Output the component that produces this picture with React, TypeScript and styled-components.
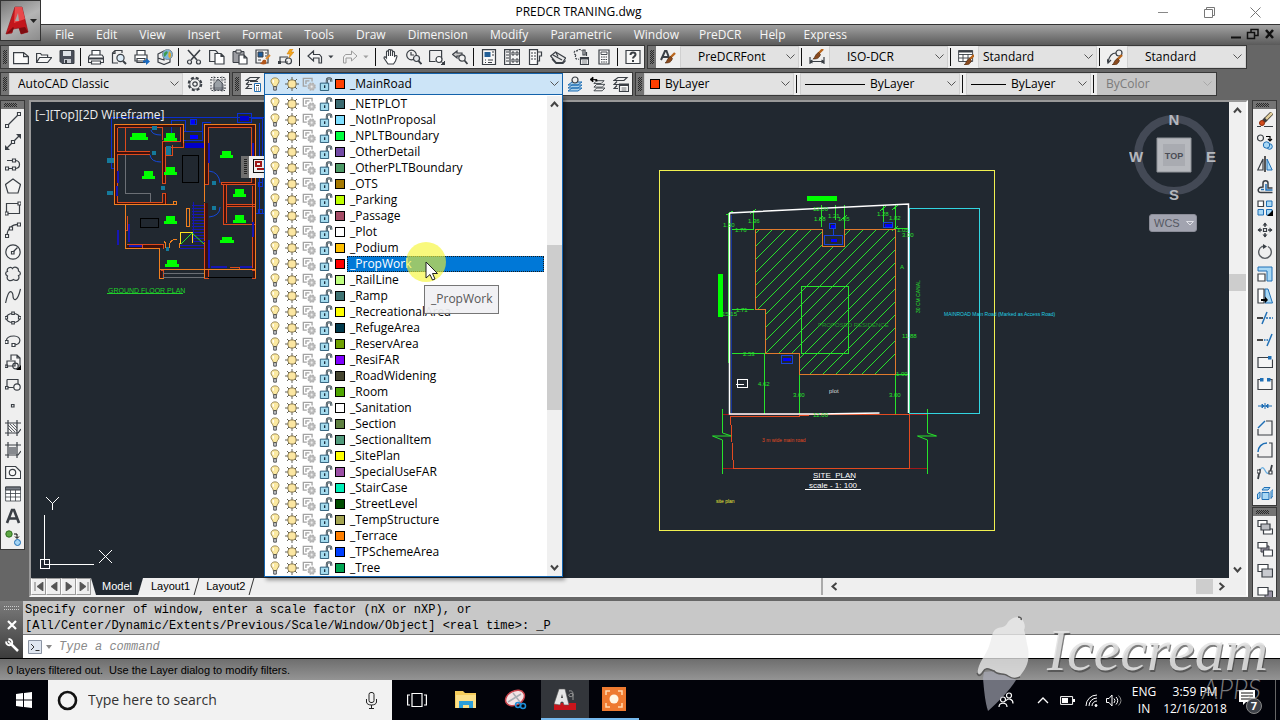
import React from 'react';
import styled, { createGlobalStyle, css } from 'styled-components';

const ui = '"Open Sans", "Noto Sans", sans-serif';
const arial = '"Liberation Sans", Arial, sans-serif';

const GlobalStyle = createGlobalStyle`
  * { box-sizing: border-box; }
  body { margin: 0; background: #666; font: 12px/16px ${ui}; color: #000; overflow: hidden; }
  button, select, input { font: inherit; color: inherit; border: 0; margin: 0; padding: 0; background: none; }
  ul { margin: 0; padding: 0; list-style: none; }
`;

/* ---------- icons ---------- */

const K = '#3a3f45';
const B = '#1f6fb5';
const L = '#a9d8f5';
const S = { fill: 'none', stroke: K, strokeWidth: 1.2 } as const;
const brush = <><path d="M15 4 10 9" stroke="#b9651c" strokeWidth="2.4" /><path d="M10.500 7.500 12.500 9.500C11 14 8 14 5 14c2-1 2-5 5.500-6.500z" fill="#8a4a1e" stroke="#4a2a12" strokeWidth=".6" /></>;
const sheets = <path d="M4 4h8l-3 3H1zM4 8h9l-3 3H1zM4 12h9l-3 3H1z" />;

const icons: Record<string, React.ReactNode> = {
  new: <path d="M.600 3.600h10l4.800 4v7H.600zM10.600 3.600v4h4.800" {...S} fill="#fafafa" />,
  open: <path d="M.600 13.500v-9h4l1 1.500h6v3M.600 13.500l3-5h12l-4 5z" {...S} fill="#f6f6f6" />,
  save: <><path d="M1 1.500h14v13H3l-2-2z" fill="#4a4f5a" stroke={K} /><path d="M4 2h8v5H4z" fill="#dfe3e8" /><path d="M5 10h7v4H5z" fill="#c9ccd2" /><path d="M6 11h2v3H6z" fill={K} /></>,
  print: <><path d="M4 6V1.500h8V6M2 6h12l1.500 2v5.500h-15V8z" {...S} fill="#fff" /><path d="M1 9.500h14" stroke={K} strokeWidth="2" /><path d="M3.500 12h9v3h-9z" {...S} fill="#fff" /></>,
  preview: <><path d="M11 4V1.500H4L1.500 4v10H7M1.500 4.500H4v-3" {...S} /><circle cx="9.500" cy="9" r="3.600" {...S} fill="#dcebf7" /><path d="m12 12 3 3" stroke={K} strokeWidth="2" /></>,
  publish: <><path d="M3 6V1.500h8V6M1 6h12v6H1zM3 9.500h8v4H3z" {...S} fill="#fff" /><path d="M9 11.500h3V9l4 3.500-4 3.500v-2.500H9z" fill="#1668c0" /></>,
  globe: <><path d="m1 5 6-3v9l-6-2zM1 9v4l6 2.500 6-2.500V9" {...S} fill="#eee" /><circle cx="10.500" cy="5.500" r="5" fill="#7ab8e0" stroke="#7d8790" /><path d="M8 3c2-2 4 0 2 2s-2 4-3 2 0-3 1-4z" fill="#3e9b4f" /><path d="M12 2c2 2 3 4 1 7-2 0-2-3-1-7z" fill="#e0a92c" /></>,
  cut: <><path d="m2 1 9 10M14 1 5 11" {...S} strokeWidth="1.600" /><circle cx="3.500" cy="13" r="2" {...S} /><circle cx="12.500" cy="13" r="2" {...S} /></>,
  copy: <><path d="M.600 1.500h6l2 2v9h-8z" {...S} /><path d="M6 4.500h6l3 3v7.500H6zM12 4.500v3h3" {...S} fill="#fff" /></>,
  paste: <><path d="M1 2.500h11v11H1z" fill="#9b9ca1" stroke={K} /><path d="M4 1h5v3H4z" fill="#ddd" stroke={K} /><path d="M7 6h5l3 3v6H7zM12 6v3h3" {...S} fill="#fff" /></>,
  match: <><path d="M1 1h12v13H1z" {...S} fill="#f4f4f4" /><path d="M3 3h5v5H3z" fill="#1d5c9c" stroke={K} /><path d="M10 4h2M10 7h2M3 11h3" stroke={K} /><path d="m15 6-4 4" stroke="#e08a2c" strokeWidth="2" /><path d="M8 11c3-1 4 0 3 4-3 1-6 0-6-1 2 0 2-2 3-3z" fill="#b2561b" /></>,
  block: <><path d="M2 14V8h8M2 13h8" {...S} /><circle cx="10.500" cy="12" r="3" {...S} /><path d="M0 12h3v3H0z" fill={K} /><path d="m12 0-3 5h3l-1 4 5-6h-3l2-3z" fill="#f4a51c" stroke="#c97a0a" strokeWidth=".5" /></>,
  undo: <path d="M6.500 2 1 7l5.500 5V9H12v5h2.500V8l-2-2.500h-6z" {...S} fill="#f6f6f6" />,
  redo: <path d="M9.500 2 15 7l-5.500 5V9H4v5H1.500V8l2-2.500h6z" fill="#f2f2f2" stroke="#9b9b9b" />,
  caret: <path d="M3 6h7L6.500 9.500z" fill={K} />,
  caretOff: <path d="M3 6h7L6.500 9.500z" fill="#a0a0a0" />,
  pan: <path d="M5 15 1 9c0-1 1-2 2.500 0V3c0-1.500 2-1.500 2 0v4-5.500c0-1.500 2-1.500 2 0V7 2c0-1.500 2-1.500 2 0v5-3.500c0-1.500 2-1.500 2 0V8c.500-2 2.500-2 2.500-.500L12.500 12l-2 3z" {...S} strokeWidth="1.100" fill="#fff" />,
  zoom: <><circle cx="5.500" cy="6" r="4.800" {...S} /><path d="M5 3v3h3" {...S} /><circle cx="10.500" cy="9.500" r="3" {...S} fill="#e4e7ea" /><path d="m12.500 12 3 3" stroke={K} strokeWidth="1.800" /></>,
  zoomWin: <><path d="M.600 1.500h12v9M.600 1.500v11h6" {...S} /><circle cx="10" cy="10.500" r="3" {...S} fill="#fff" /><path d="m12 12 2.500 3M16 12v4h-4z" fill={K} stroke={K} /></>,
  zoomPrev: <><path d="M.500 5.500 5 2v2h5v3H5v2z" {...S} fill="#c9c9c9" /><circle cx="10" cy="9" r="3.200" {...S} fill="#f1f1f1" /><path d="m12.500 11.500 3 3.500" stroke={K} strokeWidth="1.800" /></>,
  props: <><path d="M1.500.600h13v15h-13z" {...S} fill="#f8f8f8" /><path d="M3.500 3h6v5h-6z" fill="#235f97" /><path d="M11 3h2M11 6h2M4 11h1M4 13.500h1M7 11h5M7 13.500h4" stroke={K} /></>,
  center: <><path d="M.600.600h15v15h-15zM6 1v15" {...S} fill="#f4f4f4" /><path d="M2 3h3M2 6h3M2 9h3M2 12h3" stroke={K} /><path d="M8 3h2v3H8zM12 3h2v3h-2zM8 10h2v3H8zM12 10h2v3h-2z" {...S} strokeWidth="1" /></>,
  palettes: <><path d="M2.500.600h8v15h-8z" {...S} fill="#fafafa" /><path d="M10.500 3h4v4h-2v5h-2M10.500 12v3" {...S} /><path d="M4 4h2M7 4h2M4 7h2M7 7h2M4 10h2M7 10h2" stroke={K} /></>,
  sheetset: <><path d="m.600 7 5-4 10 6-3 4.500H6z" {...S} fill="#e9e9e9" /><path d="m2 10 4 4.500h7l2.500-3M3 6l9 5M6 3.500l2 4" {...S} /></>,
  markup: <><path d="M3 6C0 5 1 1 4 2c1-2 4-2 5 0M3 6c-2 3 1 5 3 4" {...S} strokeDasharray="2 1" /><path d="M10 1h2v5h-2zM13.500 3v4M7.500 8.500h8v7h-8z" {...S} fill="#fff" /><path d="M7.500 9.500h8" stroke={K} strokeWidth="2" /><path d="M9 12h5M9 14h5" stroke={K} strokeWidth=".7" /></>,
  calc: <><path d="M3 1h10v14H3z" {...S} fill="#fafafa" /><path d="M5 3h6v2.500H5z" {...S} strokeWidth=".9" /><path d="M5 8h6M5 10.500h6M5 13h6" stroke={K} strokeDasharray="1.500 .800" /></>,
  help: <><path d="M1 1.500h14v13H1z" {...S} fill="#f8f8f8" /><path d="M5.500 6c0-3.500 5-3 5-.500 0 2-2.500 2-2.500 4M8 11v2" fill="none" stroke={K} strokeWidth="2" /></>,
  textStyle: <><path d="m1 11 4-9h1.500l3 8M2.500 8h6" fill="none" stroke={K} strokeWidth="2" />{brush}</>,
  dimStyle: <><path d="M1 8v7M15 8v7M1 12.500h14M3.500 11 1 12.500 3.500 14M12.500 11l2.500 1.500-2.500 1.500" {...S} /><g transform="translate(-1 -4)">{brush}</g></>,
  tableStyle: <><path d="M.600 1.500h14v11H.600zM.600 5.500h14M.600 9h14M5 5v7.500M10 5v7.500" {...S} strokeWidth=".9" fill="#fff" /><path d="M.600 1.500h14v2H.600z" fill={K} /><g transform="translate(1 2)">{brush}</g></>,
  leaderStyle: <><path d="M1 13C2 8 4 4 9 4M0 10l1 4 3-3" {...S} /><circle cx="12" cy="4" r="3" {...S} /><g transform="translate(0 2)">{brush}</g></>,
  gear: <><circle cx="8" cy="8" r="6.300" {...S} strokeDasharray="3 1.950" strokeWidth="2" /><circle cx="8" cy="8" r="5.200" {...S} fill="#f1f1f1" strokeWidth=".8" /><circle cx="8" cy="8" r="2.200" {...S} /></>,
  home: <><path d="M1 1.500h14v13H1z" fill="none" stroke={K} strokeDasharray="1.500 1.500" /><path d="m8 3 5 5v6H4V8z" fill="#9aa0a6" stroke="#5a5f66" /><path d="M0 4h16M0 12h16M4 0v16M12 0v16" stroke={K} strokeWidth=".5" /></>,
  layerProps: <><path d="M5 1.500h9l-3 3H1zM5 5.500h8M1 8.500h6M4 5.500l-3 3M4 9.500l-3 3h6" {...S} /><path d="M9.500 7.500h6v8h-6z" fill="#fff" stroke={B} /><path d="M11 9.500h3M11 12h1M13 12h1M11 14h1M13 14h1" stroke={K} /></>,
  layerMake: <><g fill="#a9cfe9" stroke={B} strokeWidth="1"><path d="M5 6h10l-4 3H1zM5 9h10l-4 3H1zM5 12h10l-4 3H1z" /></g><circle cx="8" cy="4" r="3" {...S} fill="#eee" /></>,
  layerPrev: <><g {...S} strokeWidth="1" transform="translate(3 1) scale(.92)">{sheets}</g><path d="M0 3.500 3 1v5zM3 3.500h4v2" fill="#000" stroke="#000" strokeWidth=".8" /></>,
  layerStates: <><path d="M5 1.500h9l-3 3H1zM4 5.500l-3 3h5M4 9.500l-3 3h4" {...S} /><path d="M6.500 8h9v7.500h-9z" {...S} fill="#fff" /><path d="M6.500 9h9" stroke={K} strokeWidth="2" /><path d="M8.500 12h5M8.500 14h5" stroke={K} strokeWidth=".8" /></>,
  line: <><path d="M2 14 14 2" {...S} /><path d="M.500 12.500h3v3h-3zM12.500.500h3v3h-3z" {...S} fill="#fff" /></>,
  xline: <><path d="M2 14 14 2" {...S} /><path d="M6.500 6.500h3v3h-3z" {...S} fill="#fff" /><path d="M0 16v-5l5 5zM16 0v5l-5-5z" fill={K} /></>,
  pline: <><path d="M2 4.500h8c6 0 6 8 0 8H2" {...S} /><path d="M.500 11h3v3h-3zM7.500 3h3v3h-3zM7.500 11h3v3h-3z" {...S} fill="#fff" /></>,
  polygon: <path d="M8 1 15.500 6.500 13 15H3L.500 6.500z" {...S} fill="#f2f2f2" />,
  rect: <><path d="M1.500 3.500h13v10h-13z" {...S} /><path d="M0 12h3v3H0zM13 2h3v3h-3z" {...S} fill="#fff" /></>,
  arc: <><path d="M2 14C2 7 7 2 14 2.500" {...S} /><path d="M.500 12.500h3v3h-3zM4.500 5h3v3h-3zM12.500 1h3v3h-3z" {...S} fill="#fff" /></>,
  circle: <><circle cx="8" cy="8" r="7.200" {...S} fill="#f5f5f5" /><path d="m8 8 4.500-4.500" {...S} /><path d="M6.500 7.500h2.500V10H6.500z" {...S} fill="#fff" /></>,
  cloud: <path d="M7.500 2.500C9 0 14 1 13.500 5 16 6 16 9 13.500 9.500 15 13 12 16 8.500 13.500 5 16 1 14 2.500 10 0 8.500 0 6 2.500 5.500 1 2 6 0 7.500 2.500z" {...S} fill="#ededed" />,
  spline: <path d="M.600 15C4-2 8 4 8 8s4 8 7.500-7" {...S} />,
  ellipse: <><ellipse cx="8" cy="8" rx="6.800" ry="4.500" {...S} fill="#f3f3f3" /><path d="M0 6.500h2.500V9H0zM13.500 6.500H16V9h-2.500zM6.800 2h2.500v2.500H6.800zM6.800 11.500h2.500V14H6.800z" {...S} fill="#fff" /></>,
  ellArc: <><path d="M8 13c9 0 9-9 1-9C4 4 1 6 1.500 9" {...S} /><path d="M0 8.500h3v3H0zM7 11.500h3v3H7z" {...S} fill="#fff" /></>,
  insert: <><path d="M6 6V1h6l3 3v8M12 1v3h3M2 7h8v5H2z" {...S} fill="#f5f5f5" /><circle cx="10.500" cy="12" r="2.800" {...S} /><path d="M0 11h2.500v2.500H0z" {...S} /><path d="M16 11v5h-5z" fill="#000" /></>,
  makeBlock: <><path d="M2 3.500h11v7M2 3.500v8h8" {...S} /><circle cx="12" cy="11" r="3.200" {...S} fill="#f5f5f5" /><path d="M.500 10.500H3V13H.500z" {...S} fill="#fff" /></>,
  point: <path d="M6.500 6.500h2.500V9H6.500z" {...S} />,
  hatch: <><path d="M3 0v16M12 0v16M0 3h16M0 13h13l3-4" {...S} /><path d="m3 5 7 7M3 8l4 4M5 4l7 7M8 4l4 4" stroke={K} strokeWidth=".8" /></>,
  gradient: <><path d="M4 5h7v7H4z" fill="#86898e" /><path d="M3 0v16M12 0v16M0 3h16M0 13h13l3-4" {...S} /></>,
  region: <><path d="M.600 2.500h10l5 5v7H.600z" {...S} fill="#f7f7f7" /><circle cx="7.500" cy="8.500" r="3.200" {...S} /></>,
  table: <><path d="M.600 1h15v14H.600zM.600 7.500h15M.600 11h15M5.500 4v11M10.500 4v11" {...S} strokeWidth=".8" fill="#fff" /><path d="M.600 1h15v3H.600z" fill="#777c84" stroke={K} /></>,
  mtext: <path d="m2 15 5-13h2l5 13M4 10.500h8" fill="none" stroke={K} strokeWidth="2.600" />,
  addSel: <><circle cx="4" cy="4" r="3.200" fill="#5fa845" stroke="#2f6f20" /><circle cx="12.500" cy="12.500" r="3" fill="#a5d5f5" stroke={B} /><path d="M9 4h3v4M10 6.500l2 2 2-2" fill="none" stroke="#000" /></>,
  erase: <><path d="M15 1 8 8" stroke="#2d2a25" strokeWidth="4" /><path d="M15 1 8 8" stroke="#e2cf9c" strokeWidth="2.600" /><path d="m9 7-2.500 2.500" stroke="#3c3c3c" strokeWidth="4" /><circle cx="5" cy="11" r="2.500" fill="#d24a1c" stroke="#8a2c0c" /><path d="M0 14.500h4M7 14.500h9" stroke={K} /></>,
  copyObj: <><circle cx="3.500" cy="4" r="3" {...S} /><path d="M9 2.500h4v4M11 5l2 2 2-2" fill="none" stroke="#000" strokeWidth="1.200" /><circle cx="12.500" cy="12.500" r="2.800" fill={L} stroke={B} /><circle cx="9.500" cy="11" r="3.200" fill={L} stroke={B} /></>,
  mirror: <><path d="M6 3v11H.800z" {...S} /><path d="M10 3v11h5.200z" fill={L} stroke={B} /><path d="M8 0v16" stroke="#000" strokeWidth="1.300" /></>,
  offset: <><path d="M15.500 10H11V5c0-3-5-3-5 0v4C0 9 0 14.500 4 14.500h11.500" fill="none" stroke={K} strokeWidth="1.500" /><path d="M15.500 12H9V6M4 11.500h3" fill="none" stroke={B} strokeWidth="1.500" /></>,
  array: <><path d="M1 1h5.500v5.500H1z" {...S} fill="#fff" /><path d="M9.500 1H15v5.500H9.500zM1 9.500h5.500V15H1zM9.500 9.500H15V15H9.500z" fill={L} stroke={B} /><path d="M16 10v6h-6z" fill="#000" /></>,
  move: <><path d="M8 1v4M8 11v4M1 8h4M11 8h4" stroke={K} strokeWidth="1.400" /><path d="m5.500 3.500 2.500-3 2.500 3zM5.500 12.500l2.500 3 2.500-3zM3.500 5.500l-3 2.500 3 2.500zM12.500 5.500l3 2.500-3 2.500z" fill={K} /><path d="M6.500 6.500h3v3h-3z" {...S} /></>,
  rotate: <><path d="M11 2.500A6.300 6.300 0 1 1 5 2.500h3" fill="none" stroke="#5a5e63" strokeWidth="1.400" /><path d="m6 0 4 2.500L6 5z" fill={K} /></>,
  scale: <><path d="M1 5V1h14v14h-5V5z" fill={L} stroke={B} /><path d="M1 8h7v7H1z" {...S} fill="#fff" /></>,
  stretch: <><path d="M8 1h3l4.500 14H8z" fill={L} stroke={B} /><path d="M1 1h6v14H1z" {...S} fill="#fff" /><path d="M4 11h4V8.500l3 3.500-3 3V13H4z" fill="#000" /></>,
  trim: <><path d="M0 8h6" stroke="#000" strokeWidth="1.400" /><path d="M5 14 10 2" stroke={B} strokeWidth="1.500" /><path d="M9 8h7" stroke={B} strokeDasharray="2 1" strokeWidth="1.400" /></>,
  extend: <><path d="M0 8h6" stroke="#000" strokeWidth="1.400" /><path d="M7 8h4" stroke={B} strokeDasharray="1.500 1" strokeWidth="1.400" /><path d="m10 14 5-12" stroke={B} strokeWidth="1.500" /></>,
  breakAt: <><path d="M11 3.500H1v10h14.500v-8" {...S} fill="#f5f5f5" /><path d="M11 2h3.500v3.500H11z" fill={B} /></>,
  break: <><path d="M5 3.500H1v10h14v-10h-4" {...S} fill="#f5f5f5" /><path d="M3 2h3.500v3.500H3zM10 2h3.500v3.500H10z" fill={B} /></>,
  join: <path d="M1 8h14M5 6l2 2-2 2zM11 6 9 8l2 2zM8 5v6" fill={B} stroke={B} />,
  chamfer: <><path d="M9 1h6v14H1V9" {...S} fill="#f0f0f0" /><path d="m1 8 7-7" stroke={B} strokeWidth="1.500" /></>,
  fillet: <><path d="M12 1h3v14H1v-3" {...S} fill="#f0f0f0" /><path d="M1 10c0-5 4-9 9-9" fill="none" stroke={B} strokeWidth="1.500" /></>,
  blend: <><path d="M3 6c5-8 5 8 10 2" fill="none" stroke="#6aaee0" strokeWidth="1.300" /><path d="M1 15 3 5M13 9l2-8" {...S} strokeWidth="1.800" /><path d="M0 6h3v3H0zM12 7h3v3h-3z" {...S} fill="#fff" /></>,
  explode: <><path d="M5 6.500h7v7H5zM5 4l2-2.500h6L11 4zM14 5.500l2-2v6l-2 3zM3 6 .500 8v5L3 11.500z" fill={L} stroke={B} /></>,
  front: <><path d="M1 1.500h9v6H1zM6.500 10h9v5h-9z" {...S} fill="#fff" /><path d="M4 5h9v6H4z" {...S} fill="#b9bbc0" /></>,
  back: <><path d="M4 5h8v6H4z" fill="#9a94a5" stroke={K} /><path d="M1 1.500h9v5.500H1zM6.500 9h9v6h-9z" {...S} fill="#fff" /></>,
  above: <><path d="M1 1.500h10v7H1z" {...S} fill="#fff" /><path d="M5 6h10.500v8H5z" {...S} fill="#c8cacf" /></>,
  under: <><path d="M8 6h7.500v8H8z" fill="#9a94a5" stroke={K} /><path d="M1 2.500h10v7.500H1z" {...S} fill="#fff" /></>,
  bulb: <><path d="M8 1C4 1 3.200 4 3.500 5.500 4 8 6 8.500 6 11h4c0-2.500 2-3 2.500-5.500C12.800 4 12 1 8 1z" fill="#fbe9a0" stroke="#8d7a4a" /><path d="M6 3.500v3" stroke="#fff" strokeWidth="1.500" /><path d="M6.500 11v4h3v-4z" fill="#d8d8d8" stroke={K} /></>,
  sun: <><path d="M8 0v16M0 8h16M2.300 2.300l11.400 11.400M13.700 2.300 2.300 13.700" stroke="#4a4a40" strokeWidth="1" /><circle cx="8" cy="8" r="4.700" fill="#fbe6a2" stroke="#7d6c3c" /></>,
  vp: <><path d="M11.500 5V1.500h-10v9h4M4.500 8V4.500h4" fill="none" stroke="#a2a2a2" strokeWidth="1.500" /><circle cx="11" cy="11" r="3.800" fill="#bdbdbd" stroke="#b2b2b2" strokeDasharray="2 1" strokeWidth="2" /><circle cx="11" cy="11" r="1.200" fill="#eee" /></>,
  lock: <><path d="M9 7V4c0-3.500 5-3.500 5 0v1.500" fill="none" stroke="#2b2f33" strokeWidth="2.400" /><path d="M9 7V4c0-3.500 5-3.500 5 0v1.500" fill="none" stroke="#bfe3f2" strokeWidth=".9" /><path d="M1.500 7h9.500v8.400H1.500z" fill="#a5dcef" stroke="#1d4e6b" /><path d="M6.500 9.500v3" stroke="#123" strokeWidth="1.400" /></>,
};

const Svg = styled.svg<{ $s?: number }>`
  display: block;
  flex: none;
  width: ${p => p.$s ?? 16}px;
  height: ${p => p.$s ?? 16}px;
`;
const Icon = ({ n, s }: { n: string; s?: number }) => <Svg $s={s} viewBox="0 0 16 16" aria-hidden>{icons[n]}</Svg>;

/* ---------- frame ---------- */

const Shell = styled.div`
  display: flex;
  flex-direction: column;
  height: 100vh;
  background: #666;
`;
const Header = styled.header`
  display: grid;
  grid-template: 24px 21px / 41px 1fr;
`;
const AppButton = styled.button`
  grid-row: 1 / 3;
  display: flex;
  align-items: center;
  justify-content: center;
  height: 41px;
  border: 1px solid #333;
  background: linear-gradient(150deg, #777, #b5b5b5 50%, #8c8c8c);
  box-shadow: 0 4px 0 #5c5c5c;
`;
const TitleBar = styled.div`
  display: flex;
  padding-right: 2px;
  background: #fff;
`;
const Title = styled.h1`
  flex: 1;
  margin: 0;
  padding-right: 24px;
  font: 12px/24px ${ui};
  text-align: center;
`;
const WinButton = styled.button`
  width: 46px;
  display: grid;
  place-items: center;
`;
const MenuBar = styled.nav`
  display: flex;
  align-items: center;
  padding-left: 3px;
  border-top: 1px solid #333;
  background: linear-gradient(#a2a2a2, #5a5a5a);
`;
const MenuItem = styled.button<{ $tight?: boolean }>`
  padding: 0 ${p => (p.$tight ? 9 : 11)}px;
  color: #f6f6f6;
`;
const MdiControls = styled.div`
  display: flex;
  align-items: center;
  gap: 3px;
  margin-left: auto;
  padding: 1px 3px 0 0;
`;
const ToolRows = styled.div`
  display: flex;
  flex-direction: column;
  gap: 3px;
`;
const ToolRow = styled.div`
  display: flex;
  gap: 2px;
  height: 24px;
`;
const ToolPanel = styled.div`
  display: flex;
  border: 1px solid #383838;
  background: #efefef;
`;
const Grip = styled.span<{ $flat?: boolean }>`
  ${p => (p.$flat ? css`height: 8px;` : css`width: 8px;`)}
  flex: none;
  padding: 2px;
  background: #747474;
  &::before {
    content: '';
    display: block;
    ${p => (p.$flat ? css`width: 13px; margin-left: 1px;` : css`height: 14px; margin-top: 2px;`)}
    min-height: 4px;
    background: repeating-conic-gradient(#2a2a2a 0 25%, #747474 0 50%) 0 0 / 2px 2px;
  }
`;
const ToolButton = styled.button<{ $w?: number; $h?: number }>`
  flex: none;
  display: grid;
  place-items: center;
  width: ${p => p.$w ?? 23}px;
  height: ${p => p.$h ?? 22}px;
  overflow: hidden;
`;
const Divider = styled.span`
  width: 6px;
  padding: 2px;
  &::before { content: ''; display: block; width: 1px; height: 18px; background: #111; }
`;

const ComboBox = styled.label<{ $w: number; $off?: boolean }>`
  position: relative;
  display: flex;
  align-items: center;
  gap: 5px;
  width: ${p => p.$w}px;
  border: 1px solid ${p => (p.$off ? '#c4c4c4' : '#d0d0d0')};
  background: ${p => (p.$off ? '#c6c6c6' : '#e2e2e2')};
  color: ${p => (p.$off ? '#7b7b7b' : '#000')};
`;
const ComboSelect = styled.select<{ $pad: number }>`
  flex: 1;
  min-width: 0;
  height: 20px;
  padding-left: ${p => p.$pad}px;
  appearance: none;
  &:disabled { opacity: 1; }
`;
const Chevron = styled.svg<{ $off?: boolean }>`
  flex: none;
  width: 9px;
  height: 6px;
  margin-right: 3px;
  fill: none;
  stroke: ${p => (p.$off ? '#a8a8a8' : '#555')};
`;
const Down = ({ off }: { off?: boolean }) => <Chevron $off={off} viewBox="0 0 9 6"><path d="M.500.500 4.500 4.500 8.500.500" /></Chevron>;
const Swatch = styled.span<{ $c: string }>`
  flex: none;
  width: 10px;
  height: 10px;
  border: 1px solid #000;
  background: ${p => p.$c};
`;
const LineSample = styled.span<{ $w: number }>`
  width: ${p => p.$w}px;
  height: 1px;
  margin-left: 4px;
  background: #000;
`;

type ComboProps = { w: number; value: string; label: string; pad?: number; lead?: React.ReactNode; off?: boolean };
const Combo = ({ w, value, label, pad = 8, lead, off }: ComboProps) => (
  <ComboBox $w={w} $off={off}>
    {lead}
    <ComboSelect $pad={pad} aria-label={label} disabled={off}><option>{value}</option></ComboSelect>
    <Down off={off} />
  </ComboBox>
);

/* ---------- layer list ---------- */

const LayerCombo = styled.div`
  position: relative;
  width: 299px;
`;
const LayerCurrent = styled.button`
  display: flex;
  align-items: center;
  width: 100%;
  height: 22px;
  padding-left: 3px;
  border: 1px solid #1464ae;
  background: #cce4f7;
  text-align: left;
`;
const LayerMenu = styled.div`
  position: absolute;
  z-index: 5;
  top: 22px;
  left: 0;
  right: 0;
  display: flex;
  padding-top: 1px;
  border: 1px solid #1464ae;
  border-top: 0;
  background: #fff;
  box-shadow: 2px 3px 4px rgba(0, 0, 0, .4);
`;
const LayerList = styled.ul`
  flex: 1;
  padding: 0 3px;
`;
const LayerRow = styled.li`
  display: flex;
  align-items: center;
  height: 16px;
`;
const Flags = styled.span`
  display: flex;
  align-items: center;
  gap: 3px;
  width: 66px;
  margin-right: 1px;
`;
const LayerName = styled.span<{ $on?: boolean }>`
  flex: 1;
  height: 16px;
  margin-left: 2px;
  padding-left: 3px;
  ${p => p.$on && css`background: #0078d7; color: #fff; outline: 1px dotted #1a1a1a; outline-offset: -1px;`}
`;
const VScroll = styled.div<{ $w: number }>`
  flex: none;
  display: flex;
  flex-direction: column;
  align-items: center;
  width: ${p => p.$w}px;
  background: #f0f0f0;
`;
const Thumb = styled.span<{ $h: number }>`
  width: 100%;
  height: ${p => p.$h}px;
  background: #cdcdcd;
`;
const Space = styled.span<{ $g: number }>`flex: ${p => p.$g} 0 0;`;
const Arrow = styled.svg<{ $r?: number }>`
  flex: none;
  width: 17px;
  height: 17px;
  fill: none;
  stroke: #444;
  stroke-width: 2;
  transform: rotate(${p => p.$r ?? 0}deg);
`;
const ScrollArrow = ({ r }: { r?: number }) => <Arrow $r={r} viewBox="0 0 17 17"><path d="m5 10.500 3.500-4 3.500 4" /></Arrow>;
const Pointer = styled.svg`
  position: absolute;
  top: 146px;
  left: 140px;
  width: 44px;
  height: 44px;
`;
const Tooltip = styled.div`
  position: absolute;
  top: 190px;
  left: 159px;
  padding: 5px 6px 6px;
  border: 1px solid #767676;
  background: rgba(240, 240, 243, .93);
  color: #575757;
`;

const layers: [string, string][] = [
  ['_NETPLOT', '#3b6a70'], ['_NotInProposal', '#7fdfff'], ['_NPLTBoundary', '#00ff3f'], ['_OtherDetail', '#734aa5'],
  ['_OtherPLTBoundary', '#4c9966'], ['_OTS', '#a57800'], ['_Parking', '#bfff00'], ['_Passage', '#a54c66'],
  ['_Plot', '#ffffff'], ['_Podium', '#ffbf00'], ['_PropWork', '#ff0000'], ['_RailLine', '#bfff7f'],
  ['_Ramp', '#3f7373'], ['_RecreationalArea', '#ffff00'], ['_RefugeArea', '#00394c'], ['_ReservArea', '#6fa000'],
  ['_ResiFAR', '#7f00ff'], ['_RoadWidening', '#454530'], ['_Room', '#4fa500'], ['_Sanitation', '#ffffff'],
  ['_Section', '#5f8040'], ['_SectionalItem', '#529b7c'], ['_SitePlan', '#ffff00'], ['_SpecialUseFAR', '#9b4fa5'],
  ['_StairCase', '#00efb8'], ['_StreetLevel', '#004c00'], ['_TempStructure', '#a5a552'], ['_Terrace', '#ff7f00'],
  ['_TPSchemeArea', '#003fff'], ['_Tree', '#00a552'],
];
const LayerFlags = () => (
  <Flags><Icon n="bulb" s={14} /><Icon n="sun" s={14} /><Icon n="vp" s={14} /><Icon n="lock" s={14} /></Flags>
);

/* ---------- workspace ---------- */

const Workspace = styled.main`
  flex: 1;
  min-height: 0;
  display: flex;
  gap: 4px;
  padding: 4px 3px 4px 0;
`;
const SideTools = styled.div`
  display: flex;
  flex-direction: column;
  flex: none;
  gap: 1px;
  overflow: hidden;
`;
const SidePanel = styled.div`
  display: flex;
  flex: none;
  flex-direction: column;
  width: 25px;
  border: 1px solid #383838;
  background: #efefef;
`;
const DrawingWindow = styled.section`
  flex: 1;
  min-width: 0;
  display: flex;
  flex-direction: column;
  border: 2px solid #999;
  border-right-color: #fff;
  border-bottom-color: #f4f4f4;
`;
const DrawingRow = styled.div`
  flex: 1;
  min-height: 0;
  display: flex;
`;
const Canvas = styled.div`
  position: relative;
  flex: 1;
  min-width: 0;
  overflow: hidden;
  background: #212830;
`;
const Plan = styled.svg`
  display: block;
  width: 100%;
  height: 100%;
  font-family: ${arial};
`;
const ViewLabel = styled.div`
  position: absolute;
  top: 5px;
  left: 4px;
  color: #eee;
`;
const ViewCube = styled.svg`
  position: absolute;
  top: 8px;
  right: 12px;
  width: 88px;
  height: 94px;
  font-family: ${arial};
  font-weight: bold;
`;
const WcsButton = styled.button`
  position: absolute;
  top: 112px;
  right: 32px;
  display: flex;
  align-items: center;
  gap: 6px;
  width: 48px;
  height: 18px;
  padding-left: 4px;
  border: 1px solid #8b8d98;
  border-radius: 3px;
  background: #a2a4b0;
  color: #555862;
  font: 11px/15px ${arial};
`;
const UcsIcon = styled.svg`
  position: absolute;
  left: 8px;
  bottom: 0;
  width: 76px;
  height: 100px;
  fill: none;
  stroke: #fff;
  shape-rendering: crispEdges;
`;
const TabStrip = styled.div`
  display: flex;
  height: 17px;
  background: #efefef;
  font: 11px/17px ${arial};
`;
const NavButton = styled.button`
  width: 15px;
  display: grid;
  place-items: center;
  border: 1px solid #9a9a9a;
  border-left-color: #fff;
`;
const Tab = styled.button<{ $on?: boolean }>`
  position: relative;
  min-width: 52px;
  padding: 0 8px;
  ${p => p.$on
    ? css`background: #212830; color: #fff; clip-path: polygon(0 0, 100% 0, calc(100% - 5px) 100%, 5px 100%);`
    : css`&::after { content: ''; position: absolute; right: 1px; top: 0; width: 1px; height: 17px; background: #333; transform: skewX(-16deg); }`}
`;
const HScroll = styled.div`
  display: flex;
  align-items: center;
  width: 35%;
  margin-left: auto;
  padding-right: 16px;
  padding-left: 3px;
  border-left: 2px solid #aaa;
`;
const HThumb = styled.span`
  width: 17px;
  height: 15px;
  margin-left: auto;
  background: #cdcdcd;
`;

/* ---------- command line, status, taskbar ---------- */

const Command = styled.section`
  display: flex;
  height: 57px;
`;
const CommandSide = styled.div`
  display: flex;
  flex-direction: column;
  align-items: center;
  justify-content: space-between;
  width: 23px;
  padding: 4px 0 6px;
  background: linear-gradient(#7c7c7c, #3c3c3c);
`;
const CommandBody = styled.div`
  flex: 1;
  font: 12px/16px "Liberation Mono", monospace;
`;
const History = styled.div`
  height: 34px;
  padding: 1px 2px;
  border-bottom: 1px solid #777;
  background: #c8c8c8;
  white-space: pre;
`;
const Prompt = styled.div`
  display: flex;
  align-items: center;
  gap: 4px;
  height: 23px;
  padding-left: 5px;
  background: #fff;
`;
const PromptInput = styled.input`
  flex: 1;
  margin-left: 3px;
  font-style: italic;
  outline: 0;
  &::placeholder { color: #8a8a8a; opacity: 1; }
`;
const Status = styled.footer`
  height: 22px;
  padding-left: 7px;
  border-top: 1px solid #000;
  background: linear-gradient(#6e6e6e, #949494);
  font: 11px/22px ${arial};
  white-space: pre;
`;
const Taskbar = styled.div`
  display: flex;
  height: 40px;
  background: #02030a;
  color: #fff;
`;
const TaskButton = styled.button<{ $w?: number; $on?: boolean; $open?: boolean }>`
  flex: none;
  display: grid;
  place-items: center;
  width: ${p => p.$w ?? 50}px;
  background: ${p => (p.$on ? '#33363b' : 'none')};
  border-bottom: ${p => (p.$open ? '2px solid #76b9ed' : '0')};
`;
const Search = styled.label`
  flex: none;
  display: flex;
  align-items: center;
  gap: 10px;
  width: 344px;
  padding: 0 14px 0 9px;
  background: #f2f2f2;
  color: #222;
`;
const SearchInput = styled.input`
  flex: 1;
  min-width: 0;
  font-size: 14px;
  &::placeholder { color: #333; opacity: 1; }
`;
const Tray = styled.div`
  display: flex;
  align-items: center;
  margin-left: auto;
`;
const TrayText = styled.div<{ $w: number }>`
  width: ${p => p.$w}px;
  line-height: 17px;
  text-align: center;
`;
const ShowDesktop = styled.span`
  width: 5px;
  height: 40px;
  margin-left: 4px;
  border-left: 1px solid #666;
`;
const Watermark = styled.svg`
  position: absolute;
  z-index: 9;
  right: 0;
  bottom: 0;
  width: 310px;
  height: 110px;
  pointer-events: none;
`;
const WatermarkName = styled.text`
  font: italic 60px "Liberation Serif", serif;
  fill: rgba(226, 226, 226, .88);
  filter: drop-shadow(1px 2px 0 rgba(70, 70, 70, .8));
`;

/* ---------- drawings ---------- */

const hatchLines = Array.from({ length: 24 }, (_, i) => 530 + i * 13);
const room = (x: number, y: number, w = 13, h = 8) => <path key={`${x}-${y}`} d={`M${x} ${y + h}v-3h2v${3 - h}h${w - 4}v${h - 3}h2v3z`} />;

const FloorPlan = () => (
  <g fill="none" shapeRendering="crispEdges">
    <g stroke="#0a2fd0">
      <path d="M111.500 168V117.500H264M111 168.500h7M171.500 120v14M171 120.500h14v11M202.500 131v-9h8M259.500 123v90h5M252 118.500h10v64M256 213.500h8" />
      <path d="M237.500 113.500h14v9h-14zM190.500 119.500h6v5h-6zM183.500 131.500h19v9h-19zM258.500 182.500h4v4h-4zM258.500 209.500h4v4h-4z" />
      <path d="M240 118h9M185 145h20" stroke="#0000c8" strokeWidth="5" />
      <path d="M190 137h8M191 122h4" stroke="#00f" strokeWidth="4" />
    </g>
    <g stroke="#40100c" strokeWidth="3">
      <path d="M115.500 125v78h50v-10M115 125.500h67v20M115 152.500h35M163.500 142v41M206.500 125v59M206 125.500h48v152M206.500 203v74M222 183.500h32M224.500 184v39M225 205h29M126.500 246.500h36M160 271v7" />
    </g>
    <g stroke="#dd4a1c">
      <path d="M125.500 127v24M117.500 127.500h45M150 151.500h-33v-24M150 154.500h-33v48h45v-9h3v11M162.500 127v13M180.500 127v14h-18v42h3v-36h18v-20M208.500 127.500h43v55h-30v2h34M208.500 127v57h-4v-59M204.500 203v75h4v-9M208.500 184v-4M223.500 184v40h32M226.500 185v38M226 204.500h29M226 206.500h29M252.500 186v82M127.500 216v14h-2M127 244.500h36v4M142.500 244.500v4M160.500 270h3v8h-4M252 270h3v8h-3M230 267h9v3" />
      <path d="M172.500 145v10M165 155.500h8" />
    </g>
    <g stroke="#f08020">
      <path d="M183.500 143v-19h-69v80h60M204.500 202v-78h51v154M125.500 204v44h34v30h4M159 269.500h97M204.500 269v9" />
      <path d="M186.500 208.500h3v18h-3zM173.500 201.500h3v3h-3zM164 241q2 2 2 7M177 239q-8 0-8 9M179 248v-5" />
    </g>
    <g stroke="#1616b4"><path d="M118 171v12M118 230v15M129 224v18M209 143v20M209 240v28M253 143v20M253 222v15M211 267h16M240 267h12M117 186v10M129 246h13" strokeWidth="2" />
      <path d="M193.500 202v39h11" />{Array.from({ length: 13 }, (_, i) => <path key={i} d={`M192 ${205.5 + i * 3}h12`} />)}
      <path d="M180 245.500h24M180 248.500h24" />
    </g>
    <g stroke="#1548d8" shapeRendering="auto"><path d="M151 130q1 5 10 5M150 155q1 7 11 7M209 171q10 1 11 12M209 217q11-1 11-10" /></g>
    <path d="M125.500 155v38h25v9M163 273.500h41M163 277.500h41" stroke="#6b6f75" />
    <path d="M182.500 155.500h16v27h-16zM140.500 218.500h18v9h-18zM208 277.500h44" stroke="#000" />
    <path d="M192.500 243v-11M180.500 244v-11.500h12" stroke="#ffe21c" />
    <path d="m181 244 11-11 12 11" stroke="#27e32b" shapeRendering="auto" />
    <g fill="#157a9c"><path d="M107 158h7v5h-7zM107 191h6v4h-6zM152 126h5v4h-5zM152 151h4v4h-4zM166 146h5v9h-5zM161 186h4v4h-4zM212 181h4v4h-4zM212 206h4v4h-4zM166 247h3v4h-3z" /></g>
    <g fill="#00ff00">
      {room(130, 133, 18, 7)}{room(164, 133)}{room(142, 171)}{room(164, 167)}{room(220, 151, 13, 7)}{room(233, 189)}{room(233, 215)}{room(164, 216, 13, 8)}{room(220, 237, 14, 6)}{room(165, 260, 14, 7)}
    </g>
    <path d="M107 293.500h76" stroke="#1fd02a" />
    <text x="108" y="293" fontSize="7" fill="#1fd02a">GROUND FLOOR PLAN</text>
    <g><path d="M241 156h8v22h-8z" fill="#6e6e6e" /><path d="M249 156h20v22h-20z" fill="#f2f2f2" /><path d="M245 159v15" stroke="#222" strokeWidth="3" strokeDasharray="1 1" /><path d="M264 159.500h-10.500v13H264" stroke="#111" /><path d="M256 162h5v4h-5zM257 169h7" stroke="#a01818" strokeWidth="2" /></g>
  </g>
);

const dims: [number, number, string][] = [
  [723, 227, '1.50'], [748, 223, '1.36'], [735, 232, '1.76'], [813, 211, '12.00'], [814, 221, '1.58'], [828, 218, '1.21'], [838, 221, '1.65'], [877, 216, '1.28'], [889, 220, '1.82'],
  [897, 232, '1.05'], [902, 237, '3.00'], [736, 312, '1.71'], [722, 316, '15.15'], [743, 356, '2.53'], [758, 386, '4.62'], [793, 397, '3.00'], [889, 397, '3.00'], [902, 338, '11.88'], [896, 376, '1.00'], [813, 417, '12.00'], [900, 269, 'A'],
];

const SitePlan = () => (
  <g fill="none" shapeRendering="crispEdges">
    <clipPath id="built"><path d="M755 229h67v17h22v-17h51v145h-96v-21h-34v-44h-10z" /></clipPath>
    <path d="M659.500 170.500h335v360h-335z" stroke="#f0f050" />
    <path d="M807 196h30v5h-30zM718 274h5v43h-5z" fill="#00ff00" />
    <g stroke="#27e32b">
      <g clipPath="url(#built)">{hatchLines.map(x => <path key={x} d={`M${x} 420 l220 -220`} />)}</g>
      <path d="M801.500 286.500h47v67h-47zM729.500 213v24M753.500 211v18M821.500 205v22M835.500 205v15M844.500 205v24M883.500 205v18M895.500 205v24M731 229.500h23M731 309.500h23M731 353.500h34M764.500 353v61M799.500 374v40M895.500 374v40M896 228.500h14M896 374.500h14M728.500 213v150M819 220l4-4M841 220l6-5M726 215l7-4M750 214l6-5M880 211l6-5M892 210l6-5M892 231l6-5" />
      <path d="M722.500 409v24l9 3h-19l10 4v34M927.500 409v24l9 3h-19l10 4v34" shapeRendering="auto" />
    </g>
    <path d="M909.500 208.500h70v205h-70z" stroke="#32d5e0" />
    <path d="M909 340v73" stroke="#12e876" strokeWidth="2" />
    <path d="M731.500 215v198" stroke="#15349a" />
    <path d="M755.500 229.500h67v17h22v-17h51v145h-96v-21h-34v-44h-10z" stroke="#e07a2c" />
    <path d="M723 414.500h204M723 468.500h204" stroke="#a01818" />
    <path d="m730.500 416 3 52h176v-54h-90l-20 2z" stroke="#e24a20" />
    <path d="m729.500 213 179-9v209M729.500 213v201h88l62-1" stroke="#fff" strokeWidth="1.500" shapeRendering="auto" />
    <g stroke="#1742d8"><path d="M829.500 223.500h6v5h-6zM824.500 235.500h18v9h-18zM833.500 229v6M883.500 222.500h9v5h-9zM781.500 355.500h11v8h-11z" /><path d="M831 226h4M831 240h6M885 225h7M783 359.500h8" stroke="#00f" strokeWidth="3" /></g>
    <path d="M737.500 379.500h10v8h-10zM736 384.500h8" stroke="#fff" />
    <g fontSize="6" fill="#27e32b">{dims.map(([x, y, t]) => <text key={`${x}-${y}`} x={x} y={y}>{t}</text>)}
      <text x="818" y="327" fill="#1f9a26">PROPOSED RESIDENCE</text>
      <text transform="translate(920 313) rotate(-90)" fontSize="5">30 CM CANAL</text>
    </g>
    <text x="944" y="316" fontSize="5" fill="#22cfe0">MAINROAD Main Road (Marked as Access Road)</text>
    <text x="762" y="442" fontSize="5" fill="#e24a20">3 m wide main road</text>
    <text x="829" y="393" fontSize="6" fill="#ddd">plot</text>
    <text x="716" y="503" fontSize="5" fill="#e8e838">site plan</text>
    <g fill="#fff" fontSize="8"><text x="813" y="478">SITE&#160; PLAN</text><text x="809" y="488">scale - 1: 100</text></g>
    <path d="M813 479.500h41M805 489.500h56" stroke="#fff" />
  </g>
);

const menus = ['File', 'Edit', 'View', 'Insert', 'Format', 'Tools', 'Draw', 'Dimension', 'Modify', 'Parametric', 'Window', 'PreDCR', 'Help', 'Express'];
const addOnMenus = ['PreDCR', 'Help', 'Express'];
const standardTools = ['new', 'open', 'save', '|', 'print', 'preview', 'publish', 'globe', '|', 'cut', 'copy', 'paste', 'match', 'block', '|', 'undo', 'caret', 'redo', 'caretOff', '|', 'pan', 'zoom', 'zoomWin', 'zoomPrev', '|', 'props', 'center', 'palettes', 'sheetset', 'markup', 'calc', '|', 'help'];
const drawTools = ['line', 'xline', 'pline', 'polygon', 'rect', 'arc', 'circle', 'cloud', 'spline', 'ellipse', 'ellArc', 'insert', 'makeBlock', 'point', 'hatch', 'gradient', 'region', 'table', 'mtext', 'addSel'];
const modifyTools = ['erase', 'copyObj', 'mirror', 'offset', 'array', 'move', 'rotate', 'scale', 'stretch', 'trim', 'extend', 'breakAt', 'break', 'join', 'chamfer', 'fillet', 'blend', 'explode'];
const orderTools = ['front', 'back', 'above', 'under'];

const Tools = ({ names }: { names: string[] }) => (
  <>{names.map((n, i) => (n === '|' ? <Divider key={i} /> : <ToolButton key={i} aria-label={n} $w={n.startsWith('caret') ? 12 : undefined}><Icon n={n} s={n.startsWith('caret') ? 12 : 16} /></ToolButton>))}</>
);
const Style = ({ icon, value, pad }: { icon: string; value: string; pad: number }) => (
  <><ToolButton $w={24} aria-label={icon}><Icon n={icon} /></ToolButton><Combo w={119} value={value} label={icon} pad={pad} /></>
);
const navPaths = ['M1 0v9M9 0v9L3 4.500z', 'M8 0v9L2 4.500z', 'M2 0v9l6-4.500z', 'M1 0v9l6-4.500zM9 0v9'];

export default function App() {
  return (
    <Shell>
      <GlobalStyle />
      <Header>
        <AppButton aria-label="Application menu">
          <svg width="36" height="36" viewBox="0 0 36 36">
            <path d="M3 31 12 4h7l6 25-7 2-2-6-6 1-1 4z" fill="#c3161c" stroke="#8a0f14" strokeWidth=".6" />
            <path d="m12 4 7 0 3 12-11 4z" fill="#e8484a" /><path d="m12 18 3-8 1 8z" fill="#a9a9a9" />
            <path d="m3 31 6-2 2-4-1-1zM16 25l2 6 7-2-3-5z" fill="#7f0c10" /><path d="M27 16h7l-3.500 4z" fill="#222" />
          </svg>
        </AppButton>
        <TitleBar>
          <Title>PREDCR TRANING.dwg</Title>
          <WinButton aria-label="Minimize"><svg width="10" height="10"><path d="M0 5.500h10" stroke="#888" /></svg></WinButton>
          <WinButton aria-label="Restore"><svg width="11" height="11" fill="none" stroke="#777"><path d="M.500 2.500h8v8h-8zM2.500 2V.500h8v8H9" /></svg></WinButton>
          <WinButton aria-label="Close"><svg width="11" height="11"><path d="m.500.500 10 10M10.500.500l-10 10" stroke="#777" /></svg></WinButton>
        </TitleBar>
        <MenuBar>
          {menus.map(m => <MenuItem key={m} $tight={addOnMenus.includes(m)}>{m}</MenuItem>)}
          <MdiControls>
            <button aria-label="Minimize drawing"><svg width="14" height="12"><path d="M2 9.500h10" stroke="#111" strokeWidth="2" /></svg></button>
            <button aria-label="Restore drawing"><svg width="14" height="12" fill="none" stroke="#111" strokeWidth="1.500"><path d="M1.500 4.500h7v6h-7zM5 4V1.500h7v6H9" /></svg></button>
            <button aria-label="Close drawing"><svg width="14" height="12"><path d="m3 2 7 8M10 2l-7 8" stroke="#111" strokeWidth="2.500" /></svg></button>
          </MdiControls>
        </MenuBar>
      </Header>

      <ToolRows>
        <ToolRow>
          <ToolPanel><Grip /><Tools names={standardTools} /></ToolPanel>
          <ToolPanel>
            <Grip />
            <Style icon="textStyle" value="PreDCRFont" pad={17} /><Divider />
            <Style icon="dimStyle" value="ISO-DCR" pad={17} /><Divider />
            <Style icon="tableStyle" value="Standard" pad={4} /><Divider />
            <Style icon="leaderStyle" value="Standard" pad={17} />
          </ToolPanel>
        </ToolRow>
        <ToolRow>
          <ToolPanel>
            <Grip /><Combo w={174} value="AutoCAD Classic" label="Workspace" />
            <Tools names={['gear', 'home']} />
          </ToolPanel>
          <ToolPanel>
            <Grip /><Tools names={['layerProps']} />
            <LayerCombo>
              <LayerCurrent aria-haspopup="listbox" aria-expanded="true">
                <LayerFlags /><Swatch $c="#ff3f00" /><LayerName>_MainRoad</LayerName><Down />
              </LayerCurrent>
              <LayerMenu>
                <LayerList role="listbox" aria-label="Layers">
                  {layers.map(([name, color]) => (
                    <LayerRow key={name} role="option" aria-selected={name === '_PropWork'}>
                      <LayerFlags /><Swatch $c={color} /><LayerName $on={name === '_PropWork'}>{name}</LayerName>
                    </LayerRow>
                  ))}
                </LayerList>
                <VScroll $w={15}><ScrollArrow /><Space $g={132} /><Thumb $h={165} /><Space $g={149} /><ScrollArrow r={180} /></VScroll>
                <Tooltip role="tooltip">_PropWork</Tooltip>
                <Pointer viewBox="0 0 44 44">
                  <circle cx="21" cy="21" r="20" fill="#f5f52d" opacity=".62" />
                  <path d="M21 21v16l4-3.500 2.500 5.500 2.500-1-2.500-5.500h5z" fill="#fff" stroke="#222" />
                </Pointer>
              </LayerMenu>
            </LayerCombo>
            <Tools names={['layerMake', 'layerPrev', 'layerStates']} />
          </ToolPanel>
          <ToolPanel>
            <Grip />
            <Combo w={150} value="ByLayer" label="Color" pad={0} lead={<><span /><Swatch $c="#ff3f00" /></>} /><Divider />
            <Combo w={160} value="ByLayer" label="Linetype" pad={0} lead={<LineSample $w={60} />} /><Divider />
            <Combo w={125} value="ByLayer" label="Lineweight" pad={0} lead={<LineSample $w={35} />} /><Divider />
            <Combo w={119} value="ByColor" label="Plot style" off />
          </ToolPanel>
        </ToolRow>
      </ToolRows>

      <Workspace>
        <SideTools><SidePanel><Grip $flat /><Tools names={drawTools} /></SidePanel></SideTools>
        <DrawingWindow>
          <DrawingRow>
            <Canvas>
              <Plan role="img" aria-label="Ground floor plan and site plan">
                <g transform="translate(-31 -102)"><FloorPlan /><SitePlan /></g>
              </Plan>
              <ViewLabel>[−][Top][2D Wireframe]</ViewLabel>
              <ViewCube viewBox="0 0 88 94" fill="#b4b7bd">
                <circle cx="45" cy="45" r="36" fill="none" stroke="#434955" strokeWidth="8" />
                <path d="M28 28h34v34H28z" fill="#b7b9be" stroke="#8f9298" /><path d="M34 34h22v22H34z" fill="#a9abb1" />
                <text x="45" y="49" fontSize="9" textAnchor="middle" fill="#4b4e56">TOP</text>
                <g fontSize="15" textAnchor="middle"><text x="45" y="15">N</text><text x="45" y="90">S</text><text x="7" y="52">W</text><text x="82" y="52">E</text></g>
              </ViewCube>
              <WcsButton>WCS<svg width="8" height="5"><path d="M.500.500h7L4 4z" fill="none" stroke="#dfe0e6" /></svg></WcsButton>
              <UcsIcon viewBox="0 0 76 100">
                <path d="M5.500 86V37M5 86.500h50M1.500 81.500h9v9h-9z" />
                <path d="m60 72 13 13M73 72 60 85M7 19l6.500 6.500L20 19M13.500 25v7" />
              </UcsIcon>
            </Canvas>
            <VScroll $w={17}><ScrollArrow /><Space $g={155} /><Thumb $h={17} /><Space $g={270} /><ScrollArrow r={180} /></VScroll>
          </DrawingRow>
          <TabStrip>
            {navPaths.map((d, i) => <NavButton key={i} aria-label={`Sheet navigation ${i + 1}`}><svg width="10" height="9"><path d={d} fill="#555" stroke="#555" strokeWidth=".8" /></svg></NavButton>)}
            <Tab $on>Model</Tab><Tab>Layout1</Tab><Tab>Layout2</Tab>
            <HScroll><ScrollArrow r={-90} /><HThumb /><ScrollArrow r={90} /></HScroll>
          </TabStrip>
        </DrawingWindow>
        <SideTools>
          <SidePanel><Grip $flat /><Tools names={modifyTools} /></SidePanel>
          <SidePanel><Grip $flat /><Tools names={orderTools} /></SidePanel>
        </SideTools>
      </Workspace>

      <Command>
        <CommandSide>
          <svg width="15" height="6"><path d="M0 1.500h15M0 4.500h15" stroke="#ccc" strokeDasharray="1 1" /></svg>
          <svg width="10" height="10"><path d="m1 1 8 8M9 1 1 9" stroke="#fff" strokeWidth="2.200" /></svg>
          <svg width="14" height="14"><path d="m5 5 8 8" stroke="#fff" strokeWidth="2.500" /><path d="M1 3.500C1 6 3 8 6 7M3.500 1C6 1 8 3 7 6M3 3l2 2" fill="none" stroke="#fff" strokeWidth="1.800" /></svg>
        </CommandSide>
        <CommandBody>
          <History>{'Specify corner of window, enter a scale factor (nX or nXP), or\n[All/Center/Dynamic/Extents/Previous/Scale/Window/Object] <real time>: _P'}</History>
          <Prompt>
            <svg width="14" height="14"><path d="M.500.500h13v13H.500z" fill="#dfe6f0" stroke="#8b94a3" /><path d="m3 4 3 3-3 3M7.500 10.500h4" fill="none" stroke="#333" /></svg>
            <svg width="6" height="4"><path d="M0 0h6L3 4z" fill="#888" /></svg>
            <PromptInput aria-label="Command" placeholder="Type a command" />
          </Prompt>
        </CommandBody>
      </Command>
      <Status>{'0 layers filtered out.  Use the Layer dialog to modify filters.'}</Status>

      <Taskbar>
        <TaskButton $w={48} aria-label="Start"><svg width="16" height="16" fill="#fff"><path d="m0 2 7-1v6.500H0zM8 1l8-1v7.500H8zM0 8.500h7V15l-7-1zM8 8.500h8V16l-8-1z" /></svg></TaskButton>
        <Search>
          <svg width="21" height="21"><circle cx="10.500" cy="10.500" r="8.500" fill="none" stroke="#111" strokeWidth="2.600" /></svg>
          <SearchInput aria-label="Search" placeholder="Type here to search" />
          <svg width="13" height="17" fill="none" stroke="#222"><rect x="4" y=".500" width="5" height="10" rx="2" /><path d="M1.500 7v3c0 4 10 4 10 0V7M6.500 13v4M4 16.500h5" /></svg>
        </Search>
        <TaskButton $w={49} aria-label="Task view"><svg width="20" height="16" fill="none" stroke="#fff" strokeWidth="1.200"><path d="M5 1.500h10v13H5zM3 3H.600v10H3M17 3h2.400v10H17" /></svg></TaskButton>
        <TaskButton aria-label="File Explorer"><svg width="22" height="20"><path d="M0 1h8l2 2h11v15H0z" fill="#f5cd5c" /><path d="M1 5h20v13H1z" fill="#fbe08a" /><path d="M4 18v-7h14v7h-4v-3H8v3z" fill="#2b9fdc" /></svg></TaskButton>
        <TaskButton aria-label="Snipping Tool"><svg width="24" height="22"><ellipse cx="11" cy="9" rx="10" ry="7" transform="rotate(-28 11 9)" fill="#f4e4e6" stroke="#c8444c" strokeWidth="1.500" /><path d="m4 13 13-8M9 4l7 9" stroke="#a9aeb5" strokeWidth="1.500" /><circle cx="14" cy="16" r="2.500" fill="none" stroke="#1d8ed8" strokeWidth="1.500" /><circle cx="19" cy="17" r="2.500" fill="none" stroke="#1d8ed8" strokeWidth="1.500" /></svg></TaskButton>
        <TaskButton $w={48} $on $open aria-label="AutoCAD"><svg width="22" height="22"><path d="M0 15h22v7H0z" fill="#c8151b" /><path d="m0 16 5-15h6l4 16h-5l-1-3H7l-1 3z" fill="#e6e6e6" stroke="#555" strokeWidth=".6" /><path d="m7 10 1-4 1 4z" fill="#444" /><path d="M15 3c4-1 4 2 4 4s-3 2-4 1 2-4 4-2v6" stroke="#999" fill="none" /></svg></TaskButton>
        <TaskButton $open aria-label="Screen Recorder"><svg width="24" height="24"><path d="M0 0h24v24H0z" fill="#ee7a30" /><circle cx="12" cy="12" r="4.500" fill="#fff6e4" /><path d="M4 8V4h4M16 4h4v4M20 16v4h-4M8 20H4v-4" fill="none" stroke="#ffd9b0" strokeWidth="1.500" /></svg></TaskButton>
        <Tray>
          <TaskButton $w={50} aria-label="People"><svg width="16" height="16" fill="none" stroke="#fff" strokeWidth="1.200"><circle cx="5" cy="7.500" r="2.500" /><circle cx="11" cy="3.500" r="2.500" /><path d="M1 15c0-5 8-5 8 0M8 8.500c3-3 7-1 7 3" /></svg></TaskButton>
          <TaskButton $w={24} aria-label="Hidden icons"><svg width="12" height="7"><path d="m1 6 5-5 5 5" fill="none" stroke="#fff" strokeWidth="1.300" /></svg></TaskButton>
          <TaskButton $w={24} aria-label="Battery"><svg width="15" height="9"><path d="M.600.600h12v7.800H.600z" fill="none" stroke="#fff" /><path d="M2 2h6v5H2zM13 3h2v3h-2z" fill="#fff" /></svg></TaskButton>
          <TaskButton $w={24} aria-label="Network"><svg width="13" height="13" fill="none" stroke="#fff"><path d="M1 12A11 11 0 0 1 12 1M4 12a8 8 0 0 1 8-8M7 12a5 5 0 0 1 5-5" /><circle cx="11" cy="11.500" r="1" fill="#fff" /></svg></TaskButton>
          <TaskButton $w={22} aria-label="Volume"><svg width="16" height="13" fill="none" stroke="#fff"><path d="M.500 4.500h2.500l3-3.500v11L3 8.500H.500zM8 4.500q2 2 0 4.500M10 3q3.500 3.500 0 7.500" /><path d="M12.500 1.500q5 5 0 10" stroke="#888" /></svg></TaskButton>
          <TrayText $w={38}>ENG<br />IN</TrayText>
          <TrayText $w={64}>3:59 PM<br />12/16/2018</TrayText>
          <TaskButton $w={44} aria-label="Notifications, 7 new">
            <svg width="28" height="28"><path d="M4 4h16v12h-9l-3 3v-3H4z" fill="#fff" /><path d="M6 7h12M6 10h12M6 13h12" stroke="#111" /><circle cx="19" cy="20" r="7.500" fill="#3d4148" stroke="#888" /><text x="19" y="24" fontSize="11" fontWeight="bold" textAnchor="middle" fill="#fff">7</text></svg>
          </TaskButton>
          <ShowDesktop />
        </Tray>
      </Taskbar>

      <Watermark viewBox="0 0 310 110" aria-label="Icecream Apps">
        <path d="M13 68C14 80 15 92 18 101 30 90 40 80 46 70L38 66 24 61 14 62z" fill="rgba(170,172,186,.65)" />
        <path d="M52 9C48 6 42 7 38 12 36 16 34 17 28 18 22 20 22 27 20 33 18 42 12 48 9 56 6 64 9 66 12 62 15 56 20 60 24 60 28 66 34 62 38 66 44 70 48 68 50 66 56 58 60 52 58 38 56 30 56 26 54 20 56 16 54 12 52 9z" fill="rgba(236,236,236,.75)" />
        <path d="M7 63C9 68 12 64 13 62 16 56 20 60 24 61 28 66 34 62 38 66 44 70 47 68 50 67M48 7c2 0 4 1 3 3" fill="none" stroke="#5c5c5c" strokeWidth="1.500" />
        <WatermarkName x="77" y="60">Icecream</WatermarkName>
        <text x="232" y="89" fontFamily="Lato, sans-serif" fontStyle="italic" fontWeight="300" fontSize="27" fill="rgba(200,200,200,.6)">APPS</text>
      </Watermark>
    </Shell>
  );
}
